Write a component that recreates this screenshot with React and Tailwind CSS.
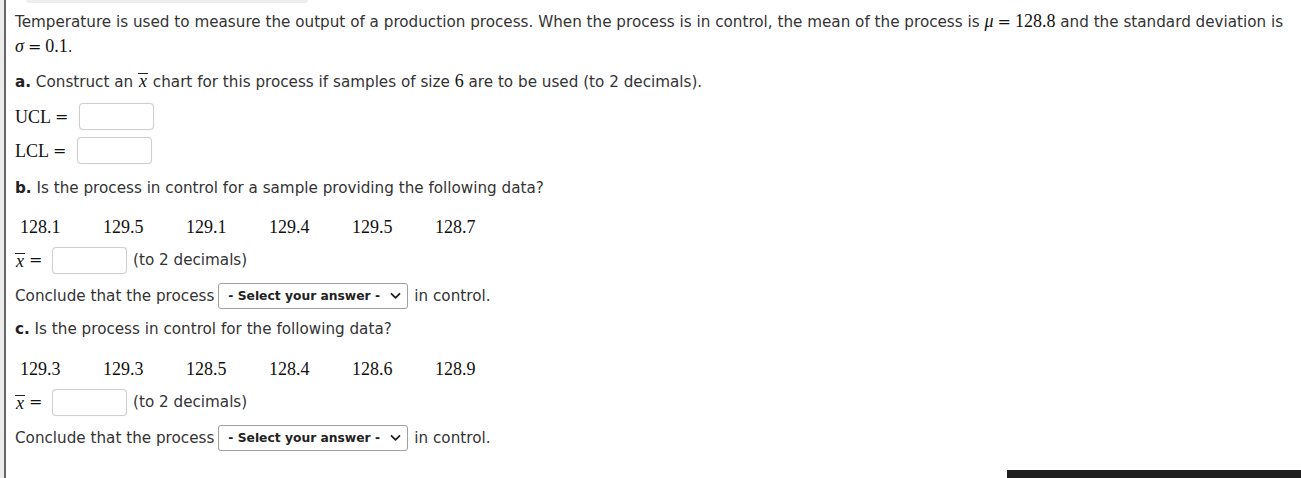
import React from 'react';

const sans = { fontFamily: '"DejaVu Sans", Verdana, sans-serif' };

const Serif = ({ children, className = '' }) => (
  <span className={`font-['Liberation_Serif',serif] text-[18px] leading-none text-[#111] ${className}`}>{children}</span>
);

// wide math-style equals sign with thick spacing around it
const Eq = () => (
  <span className="font-['DejaVu_Serif',serif] text-[16px] leading-none text-[#111] mx-[4px]">=</span>
);

const XBar = () => (
  <span className="inline-block border-t border-[#222] leading-[13px] pt-[1px] px-[1px] font-['Liberation_Serif',serif] italic text-[18px] text-[#111]">
    x
  </span>
);

const Box = ({ className = '' }) => (
  <div className={`w-[75px] h-[27px] border border-[#cfcfcf] rounded-[4px] bg-white shadow-[0_0_1px_rgba(0,0,0,0.15)] ${className}`} />
);

const SelectBox = () => (
  <div className="w-[190px] h-[26px] border border-[#a0a0a0] rounded-[3px] bg-white flex items-center justify-between pl-[9px] pr-[6px]">
    <span className="text-[12.3px] font-bold text-[#222]">- Select your answer -</span>
    <svg width="11" height="8" viewBox="0 0 11 8" fill="none">
      <path d="M1.5 1.8 L5.5 5.8 L9.5 1.8" stroke="#222" strokeWidth="1.8" strokeLinecap="round" strokeLinejoin="round" />
    </svg>
  </div>
);

const Numbers = ({ values }) => (
  <div className="h-[24px] flex items-center pl-[5px]">
    {values.map((v, i) => (
      <div key={i} className="w-[83px]">
        <Serif>{v}</Serif>
      </div>
    ))}
  </div>
);

const MeanRow = () => (
  <div className="h-[26px] flex items-center">
    <div className="w-[37px] flex items-center">
      <XBar />
      <Eq />
    </div>
    <Box className="h-[26px]" />
    <span className="ml-[6px] text-[15.2px]">(to 2 decimals)</span>
  </div>
);

const Conclude = () => (
  <div className="h-[26px] flex items-center text-[15.2px]">
    <span className="mr-[4px]">Conclude that the process</span>
    <SelectBox />
    <span className="ml-[6px]">in control.</span>
  </div>
);

export default function App() {
  return (
    <div className="h-[478px] w-[1301px] flex bg-white overflow-hidden text-[#333]" style={sans}>
      <div className="w-[4px] bg-[#ececec]" />
      <div className="flex-1 flex flex-col border-l-2 border-[#666]">
        <div className="h-[3px] w-[282px] ml-[20px] bg-[#ededed] rounded-b-[3px]" />
        <div className="pl-[9px] flex flex-col">
          <p className="mt-[7px] text-[15.2px] leading-[25px]">
            Temperature is used to measure the output of a production process. When the process is in control, the mean of the process is{' '}
            <Serif className="italic">μ</Serif>
            <Eq />
            <Serif>128.8</Serif> and the standard deviation is
            <br />
            <Serif className="italic">σ</Serif>
            <Eq />
            <Serif>0.1</Serif>.
          </p>

          <div className="mt-[10px] h-[24px] flex items-center text-[15.2px]">
            <span>
              <b className="text-[#222]">a.</b> Construct an <XBar /> chart for this process if samples of size{' '}
              <Serif>6</Serif> are to be used (to 2 decimals).
            </span>
          </div>

          <div className="mt-[9px] h-[27px] flex items-center">
            <div className="w-[64px] flex items-center">
              <Serif>UCL</Serif>
              <Eq />
            </div>
            <Box />
          </div>
          <div className="mt-[7px] h-[27px] flex items-center">
            <div className="w-[62px] flex items-center">
              <Serif>LCL</Serif>
              <Eq />
            </div>
            <Box />
          </div>

          <div className="mt-[12px] h-[24px] flex items-center text-[15.2px]">
            <span>
              <b className="text-[#222]">b.</b> Is the process in control for a sample providing the following data?
            </span>
          </div>
          <div className="mt-[16px]">
            <Numbers values={['128.1', '129.5', '129.1', '129.4', '129.5', '128.7']} />
          </div>
          <div className="mt-[7px]">
            <MeanRow />
          </div>
          <div className="mt-[10px]">
            <Conclude />
          </div>

          <div className="mt-[8px] h-[24px] flex items-center text-[15.2px]">
            <span>
              <b className="text-[#222]">c.</b> Is the process in control for the following data?
            </span>
          </div>
          <div className="mt-[17px]">
            <Numbers values={['129.3', '129.3', '128.5', '128.4', '128.6', '128.9']} />
          </div>
          <div className="mt-[7px]">
            <MeanRow />
          </div>
          <div className="mt-[10px]">
            <Conclude />
          </div>
        </div>
        <div className="flex-1" />
        <div className="self-end w-[294px] h-[8px] bg-[#1f1f1f]" />
      </div>
    </div>
  );
}
